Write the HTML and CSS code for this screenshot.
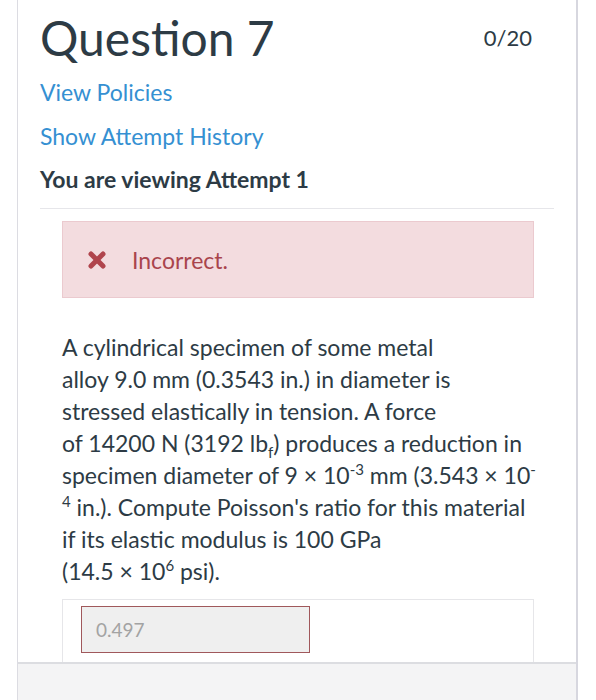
FILE: index.html
```html
<!DOCTYPE html>
<html>
<head>
<meta charset="utf-8">
<link rel="stylesheet" href="styles.css">
</head>
<body>
<div class="card">
  <div class="head">
    <div class="head-row">
      <h1 class="title">Question 7</h1>
      <div class="score">0/20</div>
    </div>
    <a class="link" href="#">View Policies</a>
    <a class="link" href="#">Show Attempt History</a>
    <div class="attempt">You are viewing Attempt 1</div>
  </div>
  <div class="body">
    <div class="alert">
      <svg class="x-icon" viewBox="0 0 20 20" width="20" height="20">
        <path d="M4 4 L16 16 M16 4 L4 16" stroke="#b0454d" stroke-width="5" stroke-linecap="round" fill="none"/>
      </svg>
      <span class="alert-text">Incorrect.</span>
    </div>
    <p class="question">A cylindrical specimen of some metal<br>alloy 9.0 mm (0.3543 in.) in diameter is<br>stressed elastically in tension. A force<br>of 14200 N (3192 lb<sub>f</sub>) produces a reduction in<br>specimen diameter of 9 × 10<sup>-3</sup> mm (3.543 × 10<sup>-</sup><br><sup>4</sup> in.). Compute Poisson's ratio for this material<br>if its elastic modulus is 100 GPa<br>(14.5 × 10<sup>6</sup> psi).</p>
    <div class="answer">
      <div class="input">0.497</div>
    </div>
  </div>
  <div class="footer"></div>
</div>
</body>
</html>
```

FILE: styles.css
```css
html, body {
  margin: 0;
  padding: 0;
  background: #ffffff;
}
body {
  font-family: Lato, "Open Sans", sans-serif;
  color: #2d3b45;
  height: 700px;
  overflow: hidden;
}
.card {
  margin-left: 17px;
  width: 558px;
  border-left: 1px solid #dcdce2;
  border-right: 2px solid #d7d7df;
  height: 700px;
  display: flex;
  flex-direction: column;
}
.head {
  margin: 0 22px;
  padding-bottom: 8px;
  border-bottom: 1px solid #e6e6ea;
}
.head-row {
  display: flex;
  justify-content: space-between;
  align-items: flex-start;
  height: 70px;
}
.title {
  margin: 2px 0 0 0;
  font-size: 48px;
  font-weight: 400;
  line-height: 72px;
  color: #2d3b45;
}
.score {
  font-size: 22px;
  line-height: 30px;
  margin-top: 23px;
  margin-right: 22px;
}
.link {
  display: block;
  font-size: 23px;
  line-height: 44px;
  color: #3590d2;
  text-decoration: none;
}
.attempt {
  font-size: 23px;
  font-weight: 700;
  line-height: 42px;
}
.body {
  padding: 12px 42px 0 44px;
  flex: 1;
}
.alert {
  height: 75px;
  background: #f3dcdf;
  border: 1px solid #ebcacf;
  display: flex;
  align-items: center;
  padding-left: 24px;
}
.x-icon {
  display: block;
}
.alert-text {
  margin-left: 25px;
  font-size: 23px;
  color: #a9444c;
}
.question {
  margin: 33px 0 0 0;
  font-size: 23px;
  line-height: 32px;
  white-space: nowrap;
}
.question sup, .question sub {
  font-size: 15px;
  line-height: 0;
}
.answer {
  margin-top: 12px;
  border: 1px solid #e6e6e9;
  border-bottom: none;
  height: 63px;
  padding: 6px 0 0 18px;
  box-sizing: border-box;
}
.input {
  width: 229px;
  height: 47px;
  box-sizing: border-box;
  background: #efefef;
  border: 1px solid #a0585b;
  font-size: 19px;
  color: #a3a3a3;
  padding-left: 14px;
  line-height: 45px;
}
.footer {
  flex: 1;
  background: #f4f4f5;
  border-top: 2px solid #dcdde1;
}
```
